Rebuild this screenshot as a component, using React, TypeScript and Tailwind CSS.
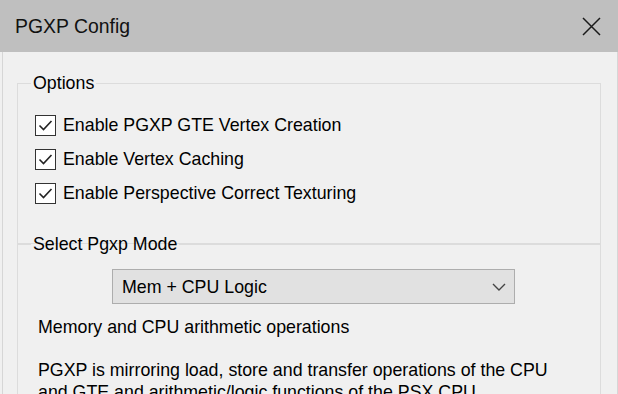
import React from "react";

const font = { fontFamily: '"Liberation Sans", Arial, sans-serif' };

function Check() {
  return (
    <svg width="21" height="21" viewBox="0 0 21 21" className="shrink-0">
      <rect x="0.5" y="0.5" width="20" height="20" fill="#ffffff" stroke="#333333" strokeWidth="1" />
      <path d="M4.5 10.5 L8.5 14.5 L16.5 6" fill="none" stroke="#222222" strokeWidth="1.6" />
    </svg>
  );
}

function Row({ label }: { label: string }) {
  return (
    <div className="flex h-[34px] items-center gap-[7px] pl-[4px]">
      <Check />
      <span className="text-[17.8px] leading-[22px] text-black">{label}</span>
    </div>
  );
}

export default function App() {
  return (
    <div
      className="w-[618px] h-[394px] overflow-hidden bg-[#f0f0f0] flex flex-col text-black"
      style={font}
    >
      <div className="h-[52px] shrink-0 bg-[#bfbfbf] flex items-center justify-between pl-[15px] pr-[17px]">
        <span className="text-[19.4px] leading-[24px] text-[#111]">PGXP Config</span>
        <svg width="19" height="19" viewBox="0 0 19 19">
          <path d="M1 1 L18 18 M18 1 L1 18" stroke="#1a1a1a" strokeWidth="1.5" fill="none" />
        </svg>
      </div>
      <div className="flex-1 ml-[2px] w-[616px] border-l border-r border-[#d6d6d6] pl-[14px] pt-[20px]">
        <fieldset className="w-[584px] border border-[#dcdcdc] pl-[13px] pr-0 pb-[33px]">
          <legend className="px-[2px] text-[17.8px] leading-[22px]">Options</legend>
          <div className="pt-[14px] flex flex-col">
            <Row label="Enable PGXP GTE Vertex Creation" />
            <Row label="Enable Vertex Caching" />
            <Row label="Enable Perspective Correct Texturing" />
          </div>
        </fieldset>
        <fieldset className="w-[584px] -mt-[11px] border border-[#dcdcdc] pl-[13px] pr-0 pb-[40px]">
          <legend className="px-[2px] text-[17.8px] leading-[22px]">Select Pgxp Mode</legend>
          <div className="mt-[14px] ml-[81px] w-[403px] h-[35px] bg-[#e1e1e1] border border-[#adadad] flex items-center justify-between pl-[9px] pr-[8px]">
            <span className="text-[17.8px] leading-[22px]">Mem + CPU Logic</span>
            <svg width="14" height="8" viewBox="0 0 14 8">
              <path d="M1 1 L7 7 L13 1" stroke="#444" strokeWidth="1.4" fill="none" />
            </svg>
          </div>
          <div className="ml-[7px] mt-[12px] text-[17.8px] leading-[22px]">
            Memory and CPU arithmetic operations
          </div>
          <div className="ml-[7px] mt-[21px] text-[17.8px] leading-[22px]">
            PGXP is mirroring load, store and transfer operations of the CPU
            <br />
            and GTE and arithmetic/logic functions of the PSX CPU.
          </div>
        </fieldset>
      </div>
    </div>
  );
}
